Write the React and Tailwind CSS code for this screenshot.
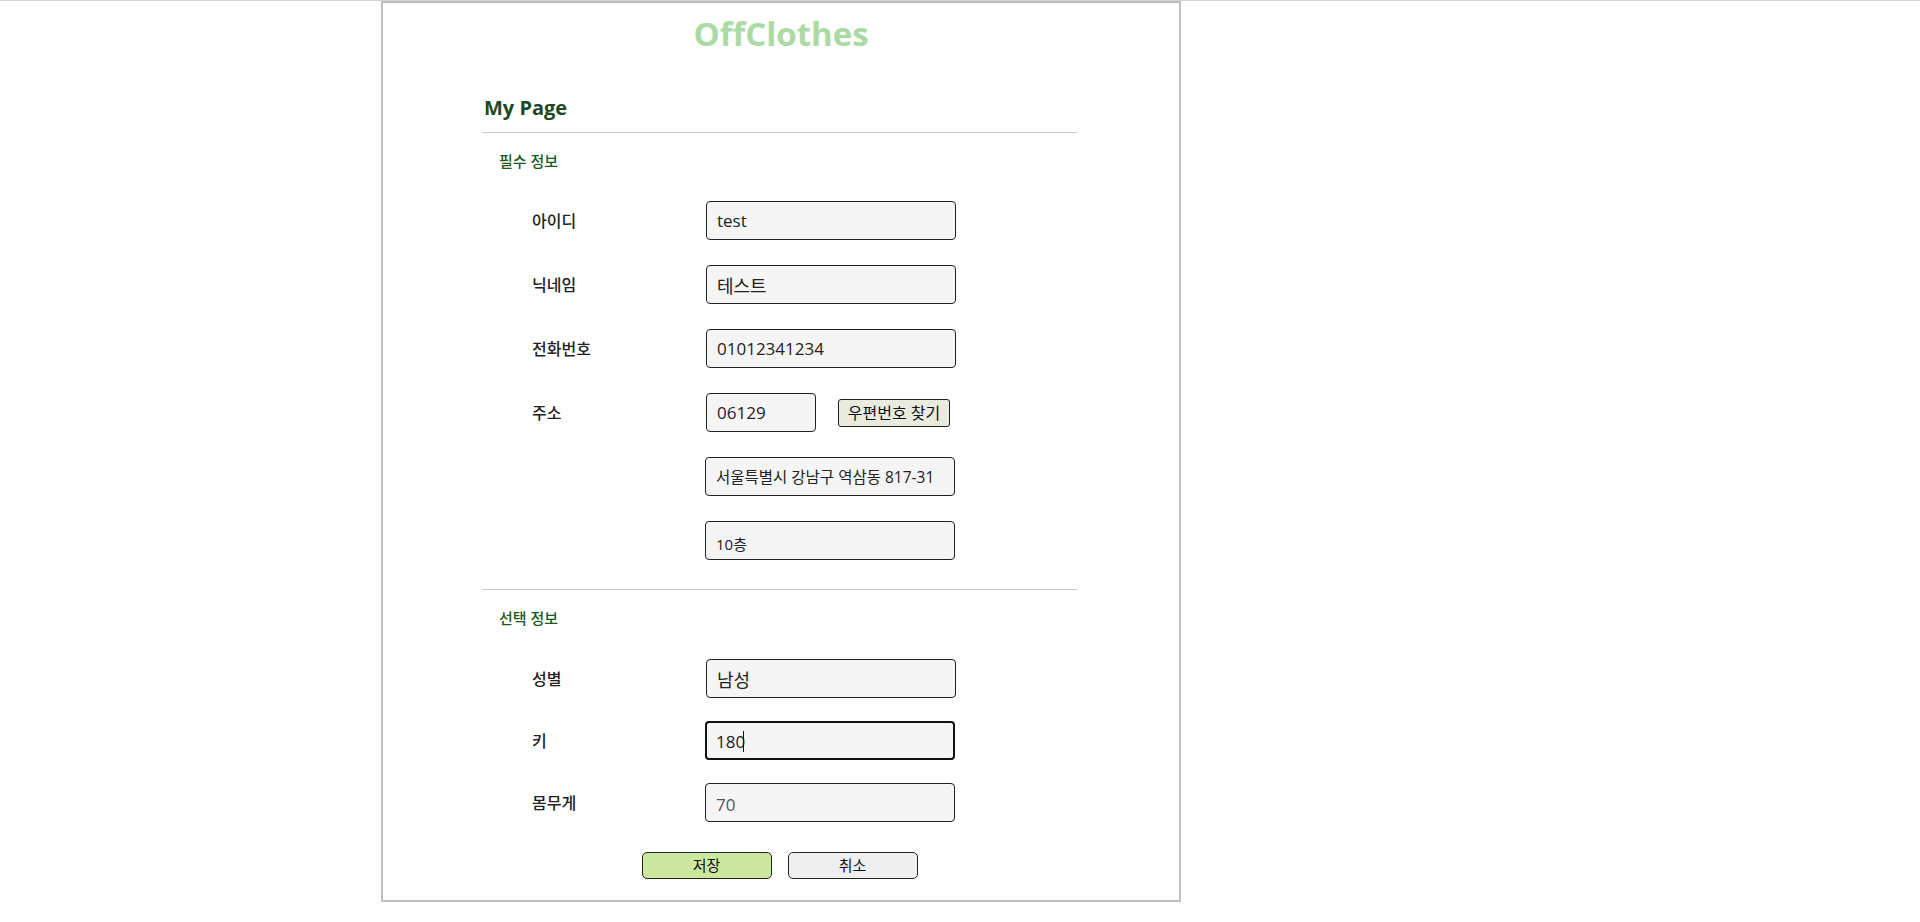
import React from 'react';

const font = { fontFamily: '"Open Sans", "Noto Sans CJK KR", sans-serif' };

function Row({ label, children }) {
  return (
    <div className="flex items-center h-[39px]">
      <div className="w-[224px] pl-[50px] text-[16px] font-medium text-[#222]">{label}</div>
      {children}
    </div>
  );
}

function Field({ value, className = '' }) {
  return (
    <input
      readOnly
      defaultValue={value}
      className={`w-[250px] h-[39px] px-[10px] bg-[#f5f5f5] border border-[#222] rounded-[4px] text-[17px] text-[#222] outline-none ${className}`}
    />
  );
}

export default function App() {
  return (
    <div style={font} className="h-screen overflow-y-scroll bg-white border-t border-[#d4d4d4]">
      <div className="ml-[381px] w-[800px] border-2 border-[#c0c0c0] pt-[11px] pb-[21px]">
        {/* TITLE */}
        <h1 className="text-center text-[33px] leading-[40px] font-bold text-[#abdaa5]">OffClothes</h1>

        <div className="ml-[99px] w-[595px] mt-[40px]">
          <h3 className="text-[20px] leading-[28px] font-bold text-[#1d4a1f] pl-[2px]">My Page</h3>
          <div className="h-[1px] bg-[#c8c8c8] mt-[10px]" />

          {/* REQUIRED */}
          <p className="mt-[18px] pl-[17px] text-[15px] leading-[20px] font-medium text-[#1b5a1e]">필수 정보</p>
          <div className="mt-[30px] flex flex-col gap-[25px]">
            <Row label="아이디"><Field value="test" /></Row>
            <Row label="닉네임"><Field value="테스트" className="text-[18px]" /></Row>
            <Row label="전화번호"><Field value="01012341234" /></Row>
            <Row label="주소">
              <Field value="06129" className="!w-[110px]" />
              <button className="ml-[22px] h-[28px] w-[112px] bg-[#e8ebdd] border border-[#222] rounded-[3px] text-[16px] leading-none text-[#111]">
                우편번호 찾기
              </button>
            </Row>
            <Row label=""><Field value="서울특별시 강남구 역삼동 817-31" className="!text-[15.5px] -ml-[1px]" /></Row>
            <Row label=""><Field value="10층" className="!text-[15px] -ml-[1px] pt-[6px]" /></Row>
          </div>

          <div className="h-[1px] bg-[#c8c8c8] mt-[29px]" />

          {/* OPTIONAL */}
          <p className="mt-[18px] pl-[17px] text-[15px] leading-[20px] font-medium text-[#1b5a1e]">선택 정보</p>
          <div className="mt-[31px] flex flex-col gap-[23px]">
            <Row label="성별"><Field value="남성" className="text-[18px]" /></Row>
            <Row label="키">
              <div className="relative -ml-[1px]">
                <input
                  readOnly
                  defaultValue="180"
                  className="w-[250px] h-[39px] px-[9px] pt-[2px] bg-[#f5f5f5] border-2 border-[#111] rounded-[4px] text-[17px] text-[#222] outline-none"
                />
                <span className="absolute left-[38px] top-[10px] w-[1px] h-[21px] bg-[#111]" />
              </div>
            </Row>
            <Row label="몸무게"><Field value="70" className="text-[#555] -ml-[1px] pt-[4px]" /></Row>
          </div>

          {/* ACTIONS */}
          <div className="mt-[30px] flex justify-center gap-[16px]">
            <button className="w-[130px] h-[27px] bg-[#cce89f] border border-[#222] rounded-[5px] text-[15px] leading-none text-[#111]">저장</button>
            <button className="w-[130px] h-[27px] bg-[#efefef] border border-[#222] rounded-[5px] text-[15px] leading-none text-[#111]">취소</button>
          </div>
        </div>
      </div>
    </div>
  );
}
